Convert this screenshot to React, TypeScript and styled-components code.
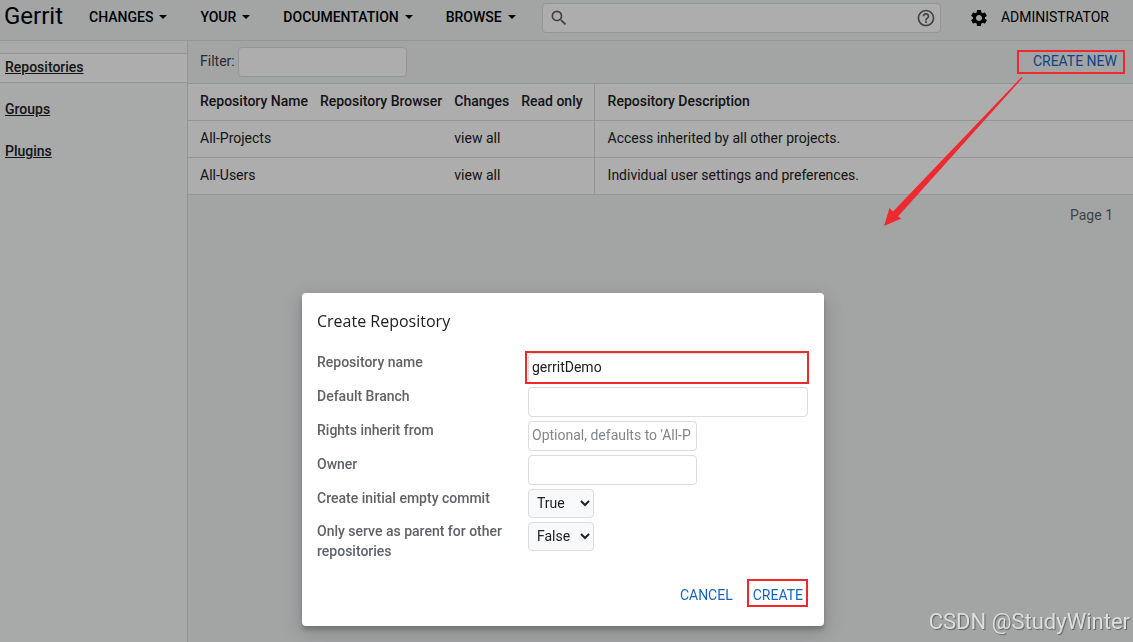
import React from "react";
import styled, { createGlobalStyle } from "styled-components";
import { MdHelpOutline, MdSearch, MdSettings } from "react-icons/md";

const GlobalStyle = createGlobalStyle`
  *, *::before, *::after { box-sizing: border-box; }
  body {
    margin: 0;
    background: #f1f3f4;
    color: #202124;
    font: 400 14px/20px Roboto, sans-serif;
  }
  a { color: inherit; text-decoration: none; }
  input, select, button { font: inherit; color: inherit; }
`;

const Page = styled.div`
  min-height: 100vh;
  display: flex;
  flex-direction: column;
`;

const Header = styled.header`
  display: flex;
  align-items: center;
  height: 41px;
  padding: 0 24px 4px 4px;
  border-bottom: 1px solid #dadce0;
  color: #000;
`;

const Brand = styled.a`
  padding-bottom: 4px;
  font-size: 24px;
  line-height: 32px;
  margin-right: 26px;
`;

const Menus = styled.nav`
  display: flex;
  gap: 33px;
`;

const MenuButton = styled.button`
  display: flex;
  align-items: center;
  gap: 6px;
  padding: 0 0 2px;
  border: 0;
  background: none;
  font-weight: 500;
  text-transform: uppercase;
  &::after {
    content: "";
    border: 4px solid transparent;
    border-top-color: currentColor;
    border-bottom: 0;
  }
`;

const SearchBox = styled.label`
  flex: 1;
  display: flex;
  align-items: center;
  height: 30px;
  margin: 0 28px 0 26px;
  padding: 0 4px 0 6px;
  border: 1px solid #dadce0;
  border-radius: 4px;
  background: #fff;
  color: #5f6368;
`;

const SearchInput = styled.input`
  flex: 1;
  min-width: 0;
  border: 0;
  outline: 0;
  background: transparent;
`;

const Account = styled.div`
  display: flex;
  align-items: center;
  gap: 12px;
`;

const AccountLink = styled.a`
  padding-bottom: 2px;
`;

const Columns = styled.div`
  flex: 1;
  display: flex;
`;

const Sidebar = styled.nav`
  flex: 0 0 188px;
  display: flex;
  flex-direction: column;
  gap: 12px;
  padding-top: 12px;
  border-right: 1px solid #dadce0;
  background: #f8f9fa;
`;

const SideLink = styled.a<{ $selected?: boolean }>`
  padding: 3px 5px 5px;
  border: solid ${(p) => (p.$selected ? "#dadce0" : "transparent")};
  border-width: 1px 0;
  background: ${(p) => (p.$selected ? "#fff" : "transparent")};
  font-weight: 500;
  text-decoration: underline;
`;

const Main = styled.main`
  flex: 1;
  min-width: 0;
`;

const Toolbar = styled.div`
  display: flex;
  align-items: center;
  justify-content: space-between;
  height: 42px;
  padding: 0 16px 0 12px;
`;

const FilterLabel = styled.label`
  display: flex;
  align-items: center;
  gap: 3px;
  color: #3c4043;
`;

const FilterText = styled.span`
  padding-bottom: 2px;
`;

const TextInput = styled.input<{ $wide?: boolean }>`
  display: block;
  width: ${(p) => (p.$wide ? "280px" : "169px")};
  height: 30px;
  padding: 0 5px 2px 3px;
  border: 1px solid #dadce0;
  border-radius: 4px;
  outline: 0;
  background: #fff;
  &::placeholder { color: #80868b; }
`;

const LinkButton = styled.button`
  padding: 0 0 2px;
  border: 0;
  background: none;
  color: #1565c0;
  text-transform: uppercase;
`;

const Table = styled.table`
  width: 100%;
  border-collapse: collapse;
  background: #fff;
  tr { border: solid #dadce0; border-width: 1px 0; }
  th, td {
    height: 37px;
    padding: 0 12px 2px 0;
    text-align: left;
    white-space: nowrap;
  }
  th { font-weight: 500; }
  th:first-child, td:first-child { padding-left: 12px; }
  th:nth-child(4), td:nth-child(4) { padding-right: 11px; }
  th:last-child, td:last-child {
    width: 100%;
    padding-left: 13px;
    border-left: 1px solid #dadce0;
  }
`;

const Pager = styled.div`
  padding: 10px 20px;
  text-align: right;
  color: #5f6368;
`;

const Backdrop = styled.div`
  position: fixed;
  inset: 0;
  display: flex;
  align-items: flex-end;
  justify-content: center;
  padding: 16px 7px 16px 0;
  background: rgba(0, 0, 0, 0.32);
`;

const Dialog = styled.form`
  padding: 16px 16px 16px 15px;
  border-radius: 4px;
  background: #fff;
  box-shadow: 0 4px 4px rgba(0, 0, 0, 0.2), 0 6px 20px 4px rgba(0, 0, 0, 0.15);
`;

const DialogTitle = styled.h1`
  margin: 0 0 20px;
  font: 400 16px/24px "Open Sans", sans-serif;
`;

const Fields = styled.div`
  display: grid;
  grid-template-columns: 211px 280px;
  row-gap: 4px;
  align-items: start;
`;

const FieldLabel = styled.label`
  margin-top: -1px;
  padding-right: 16px;
  color: #5f6368;
  font-weight: 500;
`;

const Select = styled.select`
  width: 66px;
  height: 29px;
  padding: 0 4px 1px;
  border: 1px solid #dadce0;
  border-radius: 4px;
  background: #f8f9fa;
`;

const Actions = styled.div`
  display: flex;
  justify-content: flex-end;
  gap: 10px;
  padding-top: 21px;
`;

const ActionButton = styled(LinkButton)`
  height: 28px;
  padding: 0 5px 2px;
`;

const Marked = styled.div`
  position: relative;
  &::after {
    content: "";
    position: absolute;
    inset: -2px -1px -1px -3px;
    border: 2px solid #f0282d;
    pointer-events: none;
  }
`;

const MarkedAction = styled(Marked)`
  &::after { inset: -3px 0 3px -1px; }
`;

const Annotation = styled.svg`
  position: fixed;
  top: 0;
  right: 0;
  pointer-events: none;
`;

const Watermark = styled.div`
  position: fixed;
  right: 3px;
  bottom: 7px;
  color: #dcdddd;
  font-size: 22px;
  line-height: 26px;
  text-shadow: 1px 1px 1px rgba(0, 0, 0, 0.4);
`;

const menus = ["Changes", "Your", "Documentation", "Browse"];
const repositories = [
  { name: "All-Projects", description: "Access inherited by all other projects." },
  { name: "All-Users", description: "Individual user settings and preferences." },
];

export default function App() {
  return (
    <>
      <GlobalStyle />
      <Page>
        <Header>
          <Brand href="#">Gerrit</Brand>
          <Menus>
            {menus.map((m) => (
              <MenuButton key={m} type="button">{m}</MenuButton>
            ))}
          </Menus>
          <SearchBox>
            <MdSearch size={20} />
            <SearchInput aria-label="Search" />
            <MdHelpOutline size={20} />
          </SearchBox>
          <Account>
            <MdSettings size={20} />
            <AccountLink href="#account">ADMINISTRATOR</AccountLink>
          </Account>
        </Header>
        <Columns>
          <Sidebar>
            <SideLink href="#repos" $selected>Repositories</SideLink>
            <SideLink href="#groups">Groups</SideLink>
            <SideLink href="#plugins">Plugins</SideLink>
          </Sidebar>
          <Main>
            <Toolbar>
              <FilterLabel>
                <FilterText>Filter:</FilterText>
                <TextInput />
              </FilterLabel>
              <LinkButton type="button">Create new</LinkButton>
            </Toolbar>
            <Table>
              <thead>
                <tr>
                  <th>Repository Name</th>
                  <th>Repository Browser</th>
                  <th>Changes</th>
                  <th>Read only</th>
                  <th>Repository Description</th>
                </tr>
              </thead>
              <tbody>
                {repositories.map((r) => (
                  <tr key={r.name}>
                    <td><a href="#repo">{r.name}</a></td>
                    <td />
                    <td><a href="#changes">view all</a></td>
                    <td />
                    <td>{r.description}</td>
                  </tr>
                ))}
              </tbody>
            </Table>
            <Pager>Page 1</Pager>
          </Main>
        </Columns>
      </Page>
      <Backdrop>
        <Dialog role="dialog" aria-labelledby="title" onSubmit={(e) => e.preventDefault()}>
          <DialogTitle id="title">Create Repository</DialogTitle>
          <Fields>
            <FieldLabel htmlFor="name">Repository name</FieldLabel>
            <Marked><TextInput id="name" $wide defaultValue="gerritDemo" /></Marked>
            <FieldLabel htmlFor="branch">Default Branch</FieldLabel>
            <TextInput id="branch" $wide />
            <FieldLabel htmlFor="rights">Rights inherit from</FieldLabel>
            <TextInput id="rights" placeholder="Optional, defaults to 'All-Projects'" />
            <FieldLabel htmlFor="owner">Owner</FieldLabel>
            <TextInput id="owner" />
            <FieldLabel htmlFor="commit">Create initial empty commit</FieldLabel>
            <Select id="commit" defaultValue="True">
              <option>True</option>
              <option>False</option>
            </Select>
            <FieldLabel htmlFor="parent">Only serve as parent for other repositories</FieldLabel>
            <Select id="parent" defaultValue="False">
              <option>True</option>
              <option>False</option>
            </Select>
          </Fields>
          <Actions>
            <ActionButton type="button">Cancel</ActionButton>
            <MarkedAction><ActionButton type="submit">Create</ActionButton></MarkedAction>
          </Actions>
        </Dialog>
      </Backdrop>
      <Annotation width="253" height="230" viewBox="880 0 253 230" aria-hidden="true">
        <rect x="1018" y="51" width="106" height="22" fill="none" stroke="#ee2a30" strokeWidth="2" />
        <path d="M1021.500 77 L893 211.500 L889.500 208 L884 226 L901.500 218.500 L898 216.500 L1022.500 78 Z" fill="#ee2a30" />
      </Annotation>
      <Watermark>CSDN @StudyWinter</Watermark>
    </>
  );
}
